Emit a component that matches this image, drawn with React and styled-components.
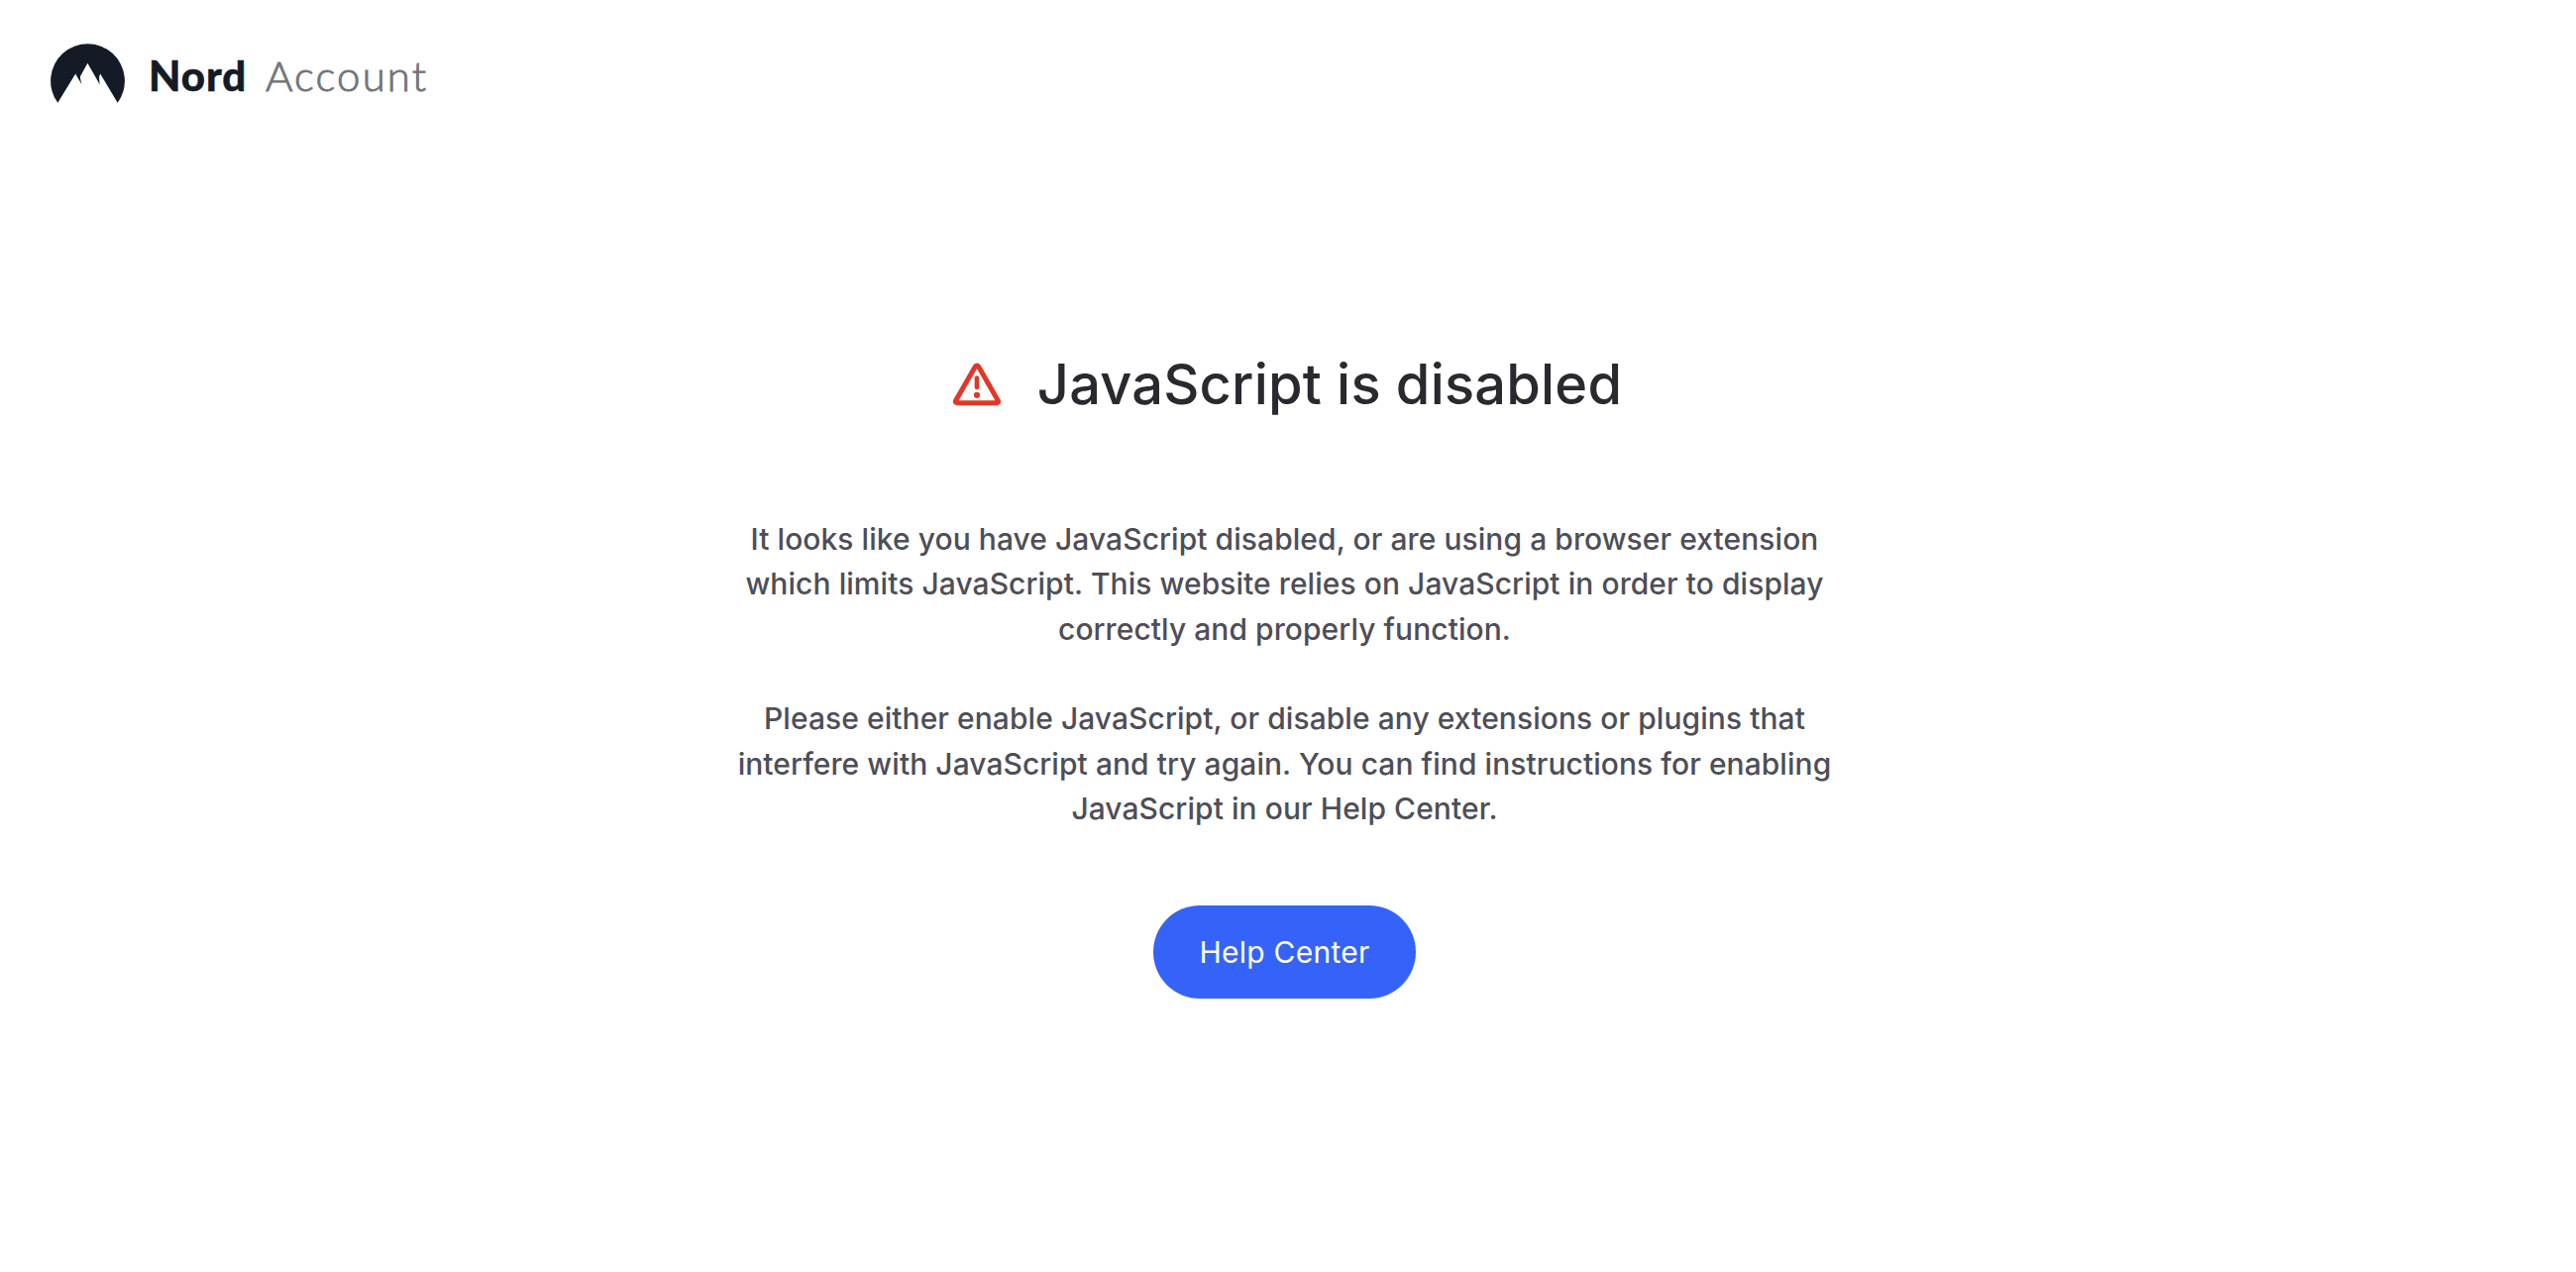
import React from "react";
import styled, { createGlobalStyle } from "styled-components";

const GlobalStyle = createGlobalStyle`
  body {
    margin: 0;
    background: #fff;
    font-family: Inter, sans-serif;
  }
`;

const Page = styled.div`
  box-sizing: border-box;
  min-height: 1284px;
  padding-right: 7px;
`;

const Header = styled.header`
  display: flex;
  align-items: center;
  height: 72px;
  padding: 40px 50px 0;
`;

const Brand = styled.span`
  margin-left: 23px;
  font-family: Lato, sans-serif;
  font-size: 42px;
  font-weight: 900;
  letter-spacing: 0.9px;
  color: #141b26;
  -webkit-text-stroke: 0.5px #141b26;
`;

const Product = styled.span`
  margin-left: 19px;
  font-family: Lato, sans-serif;
  font-size: 42px;
  font-weight: 300;
  letter-spacing: 2.1px;
  color: #72757b;
  -webkit-text-stroke: 0.9px #72757b;
`;

const Content = styled.main`
  display: flex;
  flex-direction: column;
  align-items: center;
  width: 1120px;
  margin: 0 auto;
  padding-top: 236px;
`;

const TitleRow = styled.div`
  display: flex;
  align-items: center;
  padding-left: 5px;
`;

const Title = styled.h1`
  margin: 0 0 0 36px;
  font-size: 56px;
  line-height: 80px;
  font-weight: 450;
  letter-spacing: 0.18px;
  color: #29292f;
`;

const Text = styled.p`
  margin: ${props => props.$top}px 0 0;
  font-size: 30px;
  line-height: 45.33px;
  font-weight: 450;
  letter-spacing: 0.06px;
  text-align: center;
  color: #4e4e57;
  white-space: nowrap;
`;

const Button = styled.a`
  display: flex;
  align-items: center;
  justify-content: center;
  width: 264.5px;
  height: 94px;
  margin-top: 74.7px;
  border-radius: 47px;
  font-size: 30px;
  font-weight: 400;
  letter-spacing: 0.25px;
  color: #fff;
  background: #3563f9;
  cursor: pointer;
`;

const Logo = () => (
  <svg width="77" height="66" viewBox="50 43 77 66">
    <path
      d="M58.3 103.7A37.4 37.4 0 1 1 118.7 103.7L101.2 74.4Q99.9 77 100.1 79.5L100.6 85.3L98.8 82L88.4 63.8L80.9 77.2Q80.9 80 82.7 85.3L79 79.6L76.2 74.6Z"
      fill="#141b26"
    />
  </svg>
);

const Warning = () => (
  <svg width="50" height="44" viewBox="0 0 50 44" fill="none">
    <path
      d="M23.2 4.2Q25 1.9 26.8 4.2L46.4 38.4Q47.2 40.6 45 40.7H5Q2.8 40.6 3.6 38.4Z"
      stroke="#e13728"
      strokeWidth="5"
      strokeLinejoin="round"
    />
    <path
      d="M25 15.6V25"
      stroke="#e13728"
      strokeWidth="4.6"
      strokeLinecap="round"
    />
    <circle cx="25" cy="32.8" r="3.1" fill="#e13728" />
  </svg>
);

export default function App() {
  return (
    <Page>
      <GlobalStyle />
      <Header>
        <Logo />
        <Brand>Nord</Brand>
        <Product>Account</Product>
      </Header>
      <Content>
        <TitleRow>
          <Warning />
          <Title>JavaScript is disabled</Title>
        </TitleRow>
        <Text $top={94}>
          It looks like you have JavaScript disabled, or are using a browser extension
          <br />
          which limits JavaScript. This website relies on JavaScript in order to display
          <br />
          correctly and properly function.
        </Text>
        <Text $top={45.33}>
          Please either enable JavaScript, or disable any extensions or plugins that
          <br />
          interfere with JavaScript and try again. You can find instructions for enabling
          <br />
          JavaScript in our Help Center.
        </Text>
        <Button>Help Center</Button>
      </Content>
    </Page>
  );
}
